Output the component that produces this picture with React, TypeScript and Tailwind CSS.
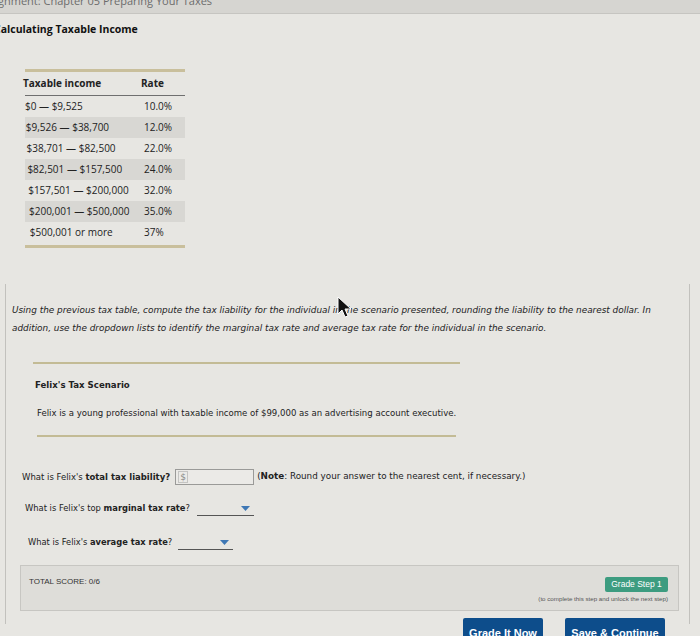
import React from "react";

const rows: [string, string][] = [
  ["$0 \u2014 $9,525", "10.0%"],
  ["$9,526 \u2014 $38,700", "12.0%"],
  ["$38,701 \u2014 $82,500", "22.0%"],
  ["$82,501 \u2014 $157,500", "24.0%"],
  ["$157,501 \u2014 $200,000", "32.0%"],
  ["$200,001 \u2014 $500,000", "35.0%"],
  ["$500,001 or more", "37%"],
];

function Dropdown({ width }: { width: number }) {
  return (
    <div className="relative h-[14px] border-b border-[#555]" style={{ width }}>
      <svg className="absolute right-[4px] top-[4px]" width="9" height="5" viewBox="0 0 9 5">
        <polygon points="0,0 9,0 4.5,5" fill="#3f78b5" />
      </svg>
    </div>
  );
}

export default function App() {
  return (
    <div className="relative w-[700px] h-[636px] overflow-hidden bg-[#e7e6e2] text-[#222] font-['Open_Sans',sans-serif]">
      {/* header strip */}
      <div className="h-[14px] bg-[#d6d5d1] border-b border-[#c6c5c1] overflow-hidden">
        <div className="-mt-[6px] ml-[-2px] text-[11px] leading-[14px] text-[#6c6c6c] whitespace-nowrap">
          gnment: Chapter 05 Preparing Your Taxes
        </div>
      </div>

      {/* title */}
      <div className="mt-[9px] ml-[-6px] text-[10.5px] leading-[12px] font-bold text-[#111] whitespace-nowrap">
        Calculating Taxable Income
      </div>

      {/* tax table */}
      <div className="mt-[34px] ml-[25px] w-[160px]">
        <div className="h-[3px] bg-[#c9bf9c]" />
        <div className="flex h-[24px] items-end pb-[4px] border-b border-[#6f6f6f] text-[10px] font-bold">
          <div className="w-[117px] -ml-[2px]">Taxable income</div>
          <div className="pl-[1px]">Rate</div>
        </div>
        {rows.map(([inc, rate], i) => (
          <div
            key={inc}
            className={`flex h-[21px] items-center text-[10px] ${i % 2 === 1 ? "bg-[#d8d7d3]" : ""}`}
          >
            <div className="w-[118px] whitespace-nowrap" style={{ paddingLeft: i * 0.8 }}>
              {inc}
            </div>
            <div className="pl-[1px]">{rate}</div>
          </div>
        ))}
        <div className="mt-[2px] h-[3px] bg-[#c9bf9c]" />
      </div>

      {/* main panel */}
      <div className="mt-[36px] ml-[5px] w-[685px] h-[340px] border-l border-r border-[#c2c1bd] font-['DejaVu_Sans',sans-serif]">
        <div className="pt-[17px] pl-[6px] pr-[10px] text-[8.9px] leading-[18px] italic text-[#222] whitespace-nowrap">
          Using the previous tax table, compute the tax liability for the individual in the scenario presented, rounding the liability to the nearest dollar. In
          <br />
          addition, use the dropdown lists to identify the marginal tax rate and average tax rate for the individual in the scenario.
        </div>

        <div className="mt-[25px] ml-[27px] w-[427px] h-[2px] bg-[#c3bb95]" />

        <div className="mt-[14px] ml-[29px] text-[8.6px] leading-[14px] font-bold">Felix&apos;s Tax Scenario</div>

        <div className="mt-[14px] ml-[31px] text-[8.55px] leading-[14px] whitespace-nowrap">
          Felix is a young professional with taxable income of $99,000 as an advertising account executive.
        </div>

        <div className="mt-[15px] ml-[31px] w-[419px] h-[2px] bg-[#c3bb95]" />

        {/* Q1 */}
        <div className="mt-[32px] ml-[16px] flex items-center h-[16px] text-[8.5px] whitespace-nowrap">
          <span>
            What is Felix&apos;s <b>total tax liability?</b>
          </span>
          <div className="ml-[5px] w-[79px] h-[16px] border border-[#9a9a98] bg-[#ebeae7] flex items-center">
            <span className="ml-[2px] px-[1px] h-[12px] leading-[11px] border border-[#c4c4c2] text-[#8a8a88] text-[9px]">$</span>
          </div>
          <span className="ml-[3px] text-[8.8px]">
            (<b>Note</b>: Round your answer to the nearest cent, if necessary.)
          </span>
        </div>

        {/* Q2 */}
        <div className="mt-[15px] ml-[19px] flex items-center h-[16px] text-[8.35px] whitespace-nowrap">
          <span>
            What is Felix&apos;s top <b>marginal tax rate</b>?
          </span>
          <div className="ml-[7px] mt-[2px]">
            <Dropdown width={57} />
          </div>
        </div>

        {/* Q3 */}
        <div className="mt-[18px] ml-[22px] flex items-center h-[16px] text-[8.3px] whitespace-nowrap">
          <span>
            What is Felix&apos;s <b>average tax rate</b>?
          </span>
          <div className="ml-[6px] mt-[2px]">
            <Dropdown width={55} />
          </div>
        </div>

        {/* score panel */}
        <div className="mt-[15px] ml-[14px] w-[659px] h-[46px] bg-[#deddd9] border border-[#c7c6c2] flex justify-between font-['Liberation_Sans',sans-serif]">
          <div className="pl-[8px] pt-[11px] text-[8px] leading-[10px] text-[#333]">TOTAL SCORE: 0/6</div>
          <div className="flex flex-col items-end pr-[10px] pt-[11px]">
            <div className="w-[63px] h-[15px] bg-[#3d9c80] rounded-[2px] text-white text-[8.5px] leading-[15px] text-center">
              Grade Step 1
            </div>
            <div className="mt-[3px] text-[6.2px] leading-[8px] text-[#555] whitespace-nowrap">
              (to complete this step and unlock the next step)
            </div>
          </div>
        </div>

        {/* bottom buttons */}
        <div className="mt-[7px] flex justify-end gap-[22px] pr-[24px] font-['Liberation_Sans',sans-serif]">
          <div className="w-[80px] h-[26px] bg-[#0d4d8b] rounded-[2px] text-white text-[11px] font-bold leading-[20px] pt-[5px] text-center">
            Grade It Now
          </div>
          <div className="w-[100px] h-[26px] bg-[#0d4d8b] rounded-[2px] text-white text-[11px] font-bold leading-[20px] pt-[5px] text-center">
            Save &amp; Continue
          </div>
        </div>
      </div>

      {/* mouse cursor */}
      <svg className="absolute left-[337px] top-[296px]" width="16" height="22" viewBox="0 0 16 22">
        <path d="M1 1 L1 18 L5 14 L8 21 L11 20 L8 13 L14 13 Z" fill="#111" stroke="#fff" strokeWidth="1" />
      </svg>
    </div>
  );
}
